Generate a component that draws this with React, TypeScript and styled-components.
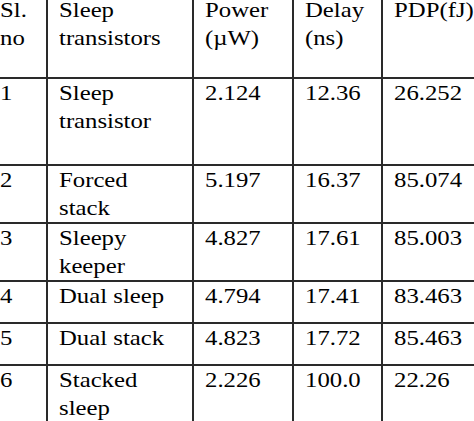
import { createGlobalStyle, styled } from "styled-components";

const GlobalStyle = createGlobalStyle`
  html, body {
    margin: 0;
    padding: 0;
    background: #fff;
  }
`;

type Entry = {
  no: string;
  name: string[];
  power: string;
  delay: string;
  pdp: string;
  height: number;
};

const rows: Entry[] = [
  { no: "1", name: ["Sleep", "transistor"], power: "2.124", delay: "12.36", pdp: "26.252", height: 87 },
  { no: "2", name: ["Forced", "stack"], power: "5.197", delay: "16.37", pdp: "85.074", height: 58 },
  { no: "3", name: ["Sleepy", "keeper"], power: "4.827", delay: "17.61", pdp: "85.003", height: 58 },
  { no: "4", name: ["Dual sleep"], power: "4.794", delay: "17.41", pdp: "83.463", height: 42 },
  { no: "5", name: ["Dual stack"], power: "4.823", delay: "17.72", pdp: "85.463", height: 42 },
  { no: "6", name: ["Stacked", "sleep"], power: "2.226", delay: "100.0", pdp: "22.26", height: 62 },
];

const header = [["Sl.", "no"], ["Sleep", "transistors"], ["Power", "(µW)"], ["Delay", "(ns)"], ["PDP(fJ)"]];

const colWidths = [59, 146, 100, 89, 110];

export default function App() {
  return (
    <Page>
      <GlobalStyle />
      <Table>
        <colgroup>
          {colWidths.map((w, i) => (
            <col key={i} style={{ width: w }} />
          ))}
        </colgroup>
        <thead>
          <Row $h={83}>
            {header.map((lines, i) => (
              <Head key={i}>
                {lines.map((line, j) => (
                  <Text key={j}>{line}</Text>
                ))}
              </Head>
            ))}
          </Row>
        </thead>
        <tbody>
          {rows.map((r) => (
            <Row key={r.no} $h={r.height}>
              <Cell>
                <Text>{r.no}</Text>
              </Cell>
              <Cell>
                {r.name.map((line, i) => (
                  <Text key={i}>{line}</Text>
                ))}
              </Cell>
              <Cell>
                <Text>{r.power}</Text>
              </Cell>
              <Cell>
                <Text>{r.delay}</Text>
              </Cell>
              <Cell>
                <Text>{r.pdp}</Text>
              </Cell>
            </Row>
          ))}
        </tbody>
      </Table>
    </Page>
  );
}

const Page = styled.div`
  width: 474px;
  height: 421px;
  overflow: hidden;
  background: #fff;
`;

const Table = styled.table`
  margin: -6px 0 0 -13px;
  border-collapse: collapse;
  table-layout: fixed;
  width: 504px;
  font-family: "Liberation Serif", "Times New Roman", serif;
  font-size: 22px;
  line-height: 28px;
  color: #000;
`;

const Row = styled.tr<{ $h: number }>`
  height: ${({ $h }) => $h}px;
`;

const Head = styled.th`
  border: 2px solid #2a2a2a;
  padding: 0 0 0 11px;
  text-align: left;
  vertical-align: top;
  font-weight: normal;
  white-space: nowrap;
`;

const Cell = styled.td`
  border: 2px solid #2a2a2a;
  padding: 0 0 0 11px;
  text-align: left;
  vertical-align: top;
  white-space: nowrap;
`;

/* the source image is stretched sideways, so the glyphs are widened */
const Text = styled.span`
  display: block;
  width: max-content;
  transform: scaleX(1.125);
  transform-origin: left center;
`;
